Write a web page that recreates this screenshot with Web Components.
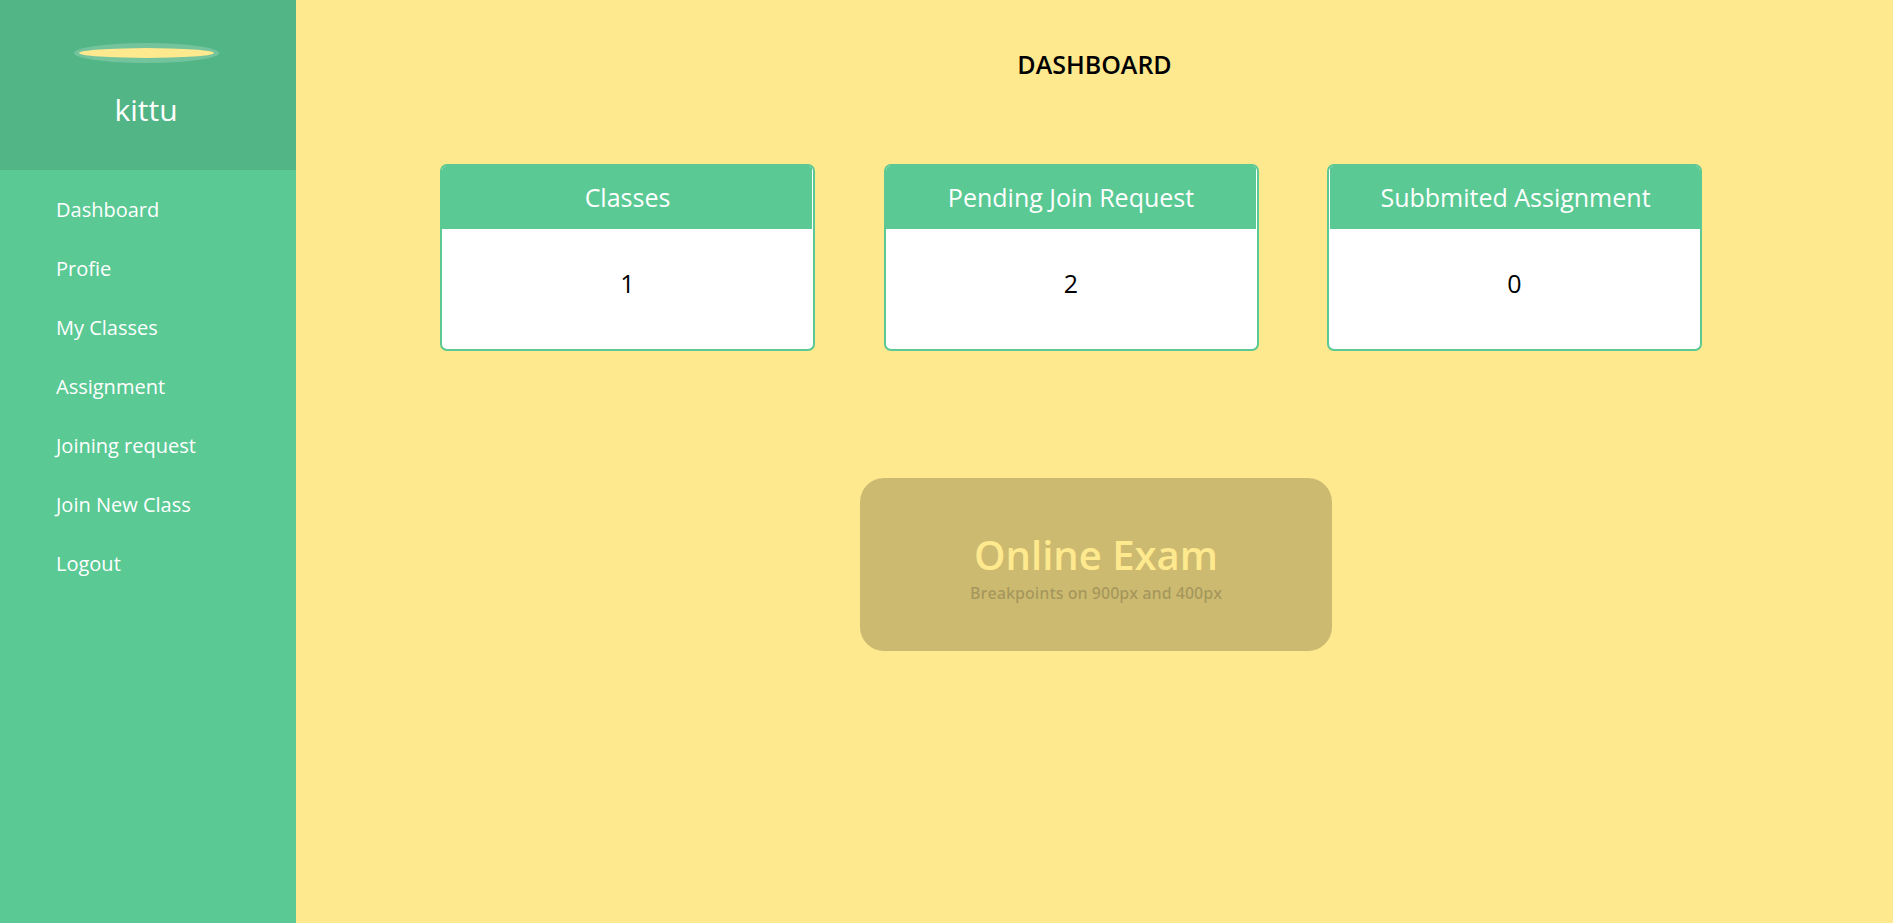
<!DOCTYPE html>
<html lang="en">
<head>
<meta charset="utf-8">
<title>Dashboard</title>
<style>
html,body{margin:0;height:100%;overflow:hidden;background:#ffe98e;font-family:"Open Sans","Noto Sans",sans-serif}
</style>
</head>
<body>
<app-shell>
  <side-bar slot="side" name="kittu">
    <nav-item>Dashboard</nav-item>
    <nav-item>Profie</nav-item>
    <nav-item>My Classes</nav-item>
    <nav-item>Assignment</nav-item>
    <nav-item>Joining request</nav-item>
    <nav-item>Join New Class</nav-item>
    <nav-item>Logout</nav-item>
  </side-bar>
  <dash-title>DASHBOARD</dash-title>
  <card-row>
    <stat-card heading="Classes" value="1" sliver="right"></stat-card>
    <stat-card heading="Pending Join Request" value="2" sliver="right"></stat-card>
    <stat-card heading="Subbmited Assignment" value="0" sliver="left"></stat-card>
  </card-row>
  <exam-banner heading="Online Exam" note="Breakpoints on 900px and 400px"></exam-banner>
</app-shell>
<script>
function def(tag, html){
  customElements.define(tag, class extends HTMLElement{
    connectedCallback(){
      if(this.shadowRoot) return;
      const r=this.attachShadow({mode:"open"});
      r.innerHTML=html(this);
    }
  });
}
def("app-shell",()=>`<style>
:host{display:grid;grid-template-columns:296px 1fr;height:100vh;overflow:hidden}
main{min-width:0;display:flex;flex-direction:column}
</style><slot name="side"></slot><main><slot></slot></main>`);
def("side-bar",h=>`<style>
:host{display:block;background:#5ac994;color:#fff;height:100%}
header{background:#51b585;height:170px;box-sizing:border-box;padding:43px 4px 0 0;display:flex;flex-direction:column;align-items:center}
.ava{width:145px;height:20px;margin-left:1px;box-sizing:border-box;border:5px solid rgba(255,255,255,.2);border-radius:50%;background:#ffe98e;background-clip:padding-box}
.name{font-size:30px;line-height:41px;margin-top:26px}
nav{display:flex;flex-direction:column;padding-top:10px}
</style><header><div class="ava"></div><div class="name">${h.getAttribute("name")}</div></header><nav><slot></slot></nav>`);
def("nav-item",()=>`<style>
:host{display:block;font-size:20px;line-height:59px;padding-left:56px;color:#fff}
</style><slot></slot>`);
def("dash-title",()=>`<style>
:host{display:block;box-sizing:border-box;text-align:center;font-size:25px;font-weight:560;color:#000;line-height:34px;padding-top:47px;height:164px}
</style><slot></slot>`);
def("card-row",()=>`<style>
:host{display:flex;gap:68.5px;padding-left:144px}
</style><slot></slot>`);
def("stat-card",h=>{
  const s=h.getAttribute("sliver");
  return `<style>
:host{display:block;width:375px;height:187px;box-sizing:border-box;background:#fff;border:2px solid #5ac994;border-radius:7px;overflow:hidden}
.h{background:#5ac994;color:#fff;height:63px;font-size:25px;line-height:63px;text-align:center;${s==="right"?"margin:0 1px 0 -1px;padding-left:2px":"margin:0 -1px 0 1px"}}
.v{color:#000;font-size:25px;line-height:36px;text-align:center;padding-top:36px}
</style><div class="h">${h.getAttribute("heading")}</div><div class="v">${h.getAttribute("value")}</div>`;
});
def("exam-banner",h=>`<style>
:host{display:block;box-sizing:border-box;width:472px;height:173px;margin:127px 0 0 564px;background:rgba(0,0,0,.2);border-radius:24px;text-align:center;padding-top:51px}
.t{font-size:40px;font-weight:600;line-height:51px;color:#ffe98e}
.n{font-size:16px;font-weight:600;line-height:24px;margin-top:1px;color:rgba(0,0,0,.2)}
</style><div class="t">${h.getAttribute("heading")}</div><div class="n">${h.getAttribute("note")}</div>`);
</script>
</body>
</html>
